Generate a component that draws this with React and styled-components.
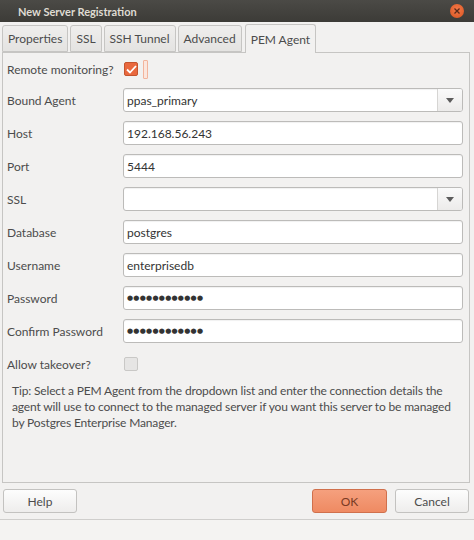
import React from 'react';
import styled, { createGlobalStyle } from 'styled-components';

const GlobalStyle = createGlobalStyle`
  html, body {
    margin: 0;
    padding: 0;
    background: #f2f1f0;
  }
  body {
    font-family: Lato, "Noto Sans", sans-serif;
  }
`;

const fields = [
  { label: 'Bound Agent', value: 'ppas_primary', select: true },
  { label: 'Host', value: '192.168.56.243' },
  { label: 'Port', value: '5444' },
  { label: 'SSL', value: '', select: true },
  { label: 'Database', value: 'postgres' },
  { label: 'Username', value: 'enterprisedb' },
  { label: 'Password', value: '●●●●●●●●●●●●', secret: true },
  { label: 'Confirm Password', value: '●●●●●●●●●●●●', secret: true },
];

const tabs = ['Properties', 'SSL', 'SSH Tunnel', 'Advanced', 'PEM Agent'];

const App = () => (
  <Window>
    <GlobalStyle />
    <TitleBar>
      <Title>New Server Registration</Title>
      <CloseButton>
        <svg width="8" height="8" viewBox="0 0 8 8">
          <path d="M1.5 1.5 L6.5 6.5 M6.5 1.5 L1.5 6.5" stroke="#5a2a1a" strokeWidth="1.3" />
        </svg>
      </CloseButton>
    </TitleBar>

    <TabBar>
      {tabs.map(t => (
        <Tab key={t} active={t === 'PEM Agent'}>{t}</Tab>
      ))}
    </TabBar>

    <Panel>
      <CheckRow>
        <Label>Remote monitoring?</Label>
        <CheckBox checked>
          <svg width="11" height="9" viewBox="0 0 11 9">
            <path d="M1 4.5 L4 7.5 L10 1" stroke="#fff" strokeWidth="1.8" fill="none" />
          </svg>
        </CheckBox>
        <FocusBar />
      </CheckRow>

      {fields.map(f => (
        <Row key={f.label}>
          <Label>{f.label}</Label>
          <Input>
            <InputText secret={f.secret}>{f.value}</InputText>
            {f.select && (
              <DropButton>
                <svg width="8" height="5" viewBox="0 0 8 5">
                  <path d="M0 0 L8 0 L4 5 Z" fill="#5c5c5c" />
                </svg>
              </DropButton>
            )}
          </Input>
        </Row>
      ))}

      <CheckRow>
        <Label>Allow takeover?</Label>
        <CheckBox />
      </CheckRow>

      <Tip>
        Tip: Select a PEM Agent from the dropdown list and enter the connection details the
        agent will use to connect to the managed server if you want this server to be managed
        by Postgres Enterprise Manager.
      </Tip>
    </Panel>

    <ButtonBar>
      <Button>Help</Button>
      <Spacer />
      <Button primary>OK</Button>
      <Button>Cancel</Button>
    </ButtonBar>
    <Footer />
  </Window>
);

const Window = styled.div`
  width: 474px;
  height: 540px;
  display: flex;
  flex-direction: column;
  background: #f2f1f0;
  overflow: hidden;
  font-size: 12px;
  color: #4c4c4c;
`;

const TitleBar = styled.div`
  height: 22px;
  flex: none;
  display: flex;
  align-items: center;
  padding: 0 10px 0 18px;
  background: linear-gradient(#4b4a46, #3c3b37);
`;

const Title = styled.div`
  flex: 1;
  font-weight: bold;
  font-size: 11px;
  color: #dfdbd2;
`;

const CloseButton = styled.div`
  width: 14px;
  height: 14px;
  border-radius: 50%;
  background: radial-gradient(circle at 50% 40%, #f47a4a, #d8531f);
  display: flex;
  align-items: center;
  justify-content: center;
`;

const TabBar = styled.div`
  height: 30px;
  flex: none;
  display: flex;
  align-items: flex-end;
  gap: 2px;
  padding-left: 2px;
  position: relative;
  z-index: 1;
`;

const Tab = styled.div`
  height: ${p => (p.active ? '28px' : '25px')};
  margin-bottom: ${p => (p.active ? '-1px' : '0')};
  padding: 0 5px;
  display: flex;
  align-items: center;
  border: 1px solid #c6c5c3;
  border-bottom: ${p => (p.active ? 'none' : '1px solid #c6c5c3')};
  border-radius: 3px 3px 0 0;
  background: ${p => (p.active ? '#f2f1f0' : 'linear-gradient(#efeeed, #e4e3e1)')};
  color: #4c4c4c;
  font-size: 12px;
  margin-left: ${p => (p.active ? '1px' : '0')};
`;

const Panel = styled.div`
  height: 431px;
  flex: none;
  margin: 0 4px 0 2px;
  border: 1px solid #c6c5c3;
  display: flex;
  flex-direction: column;
  padding: 4px 6px 0 4px;
  box-sizing: border-box;
`;

const CheckRow = styled.div`
  height: 24px;
  display: flex;
  align-items: center;
  margin-bottom: 7px;
`;

const Row = styled.div`
  height: 24px;
  display: flex;
  align-items: center;
  margin-bottom: 9px;
`;

const Label = styled.div`
  width: 116px;
  flex: none;
  color: #4c4c4c;
  font-size: 12px;
`;

const CheckBox = styled.div`
  width: 14px;
  height: 14px;
  box-sizing: border-box;
  border-radius: 2px;
  margin-left: 1px;
  display: flex;
  align-items: center;
  justify-content: center;
  background: ${p => (p.checked ? '#e9683e' : '#e6e5e4')};
  border: 1px solid ${p => (p.checked ? '#c4542e' : '#c9c8c6')};
`;

const FocusBar = styled.div`
  width: 3px;
  height: 17px;
  margin-left: 5px;
  border: 1px solid #f2b49c;
  border-radius: 1px;
  background: #fbe6dd;
`;

const Input = styled.div`
  flex: 1;
  height: 24px;
  box-sizing: border-box;
  display: flex;
  align-items: stretch;
  background: #fff;
  border: 1px solid #bcbbb9;
  border-radius: 3px;
  box-shadow: inset 0 1px 1px rgba(0, 0, 0, 0.06);
  overflow: hidden;
`;

const InputText = styled.div`
  flex: 1;
  display: flex;
  align-items: center;
  padding-left: 3px;
  color: #333;
  font-size: ${p => (p.secret ? '7px' : '12px')};
  letter-spacing: ${p => (p.secret ? '0.25px' : '0')};
  font-family: ${p => (p.secret ? '"DejaVu Sans", sans-serif' : 'inherit')};
`;

const DropButton = styled.div`
  width: 24px;
  flex: none;
  display: flex;
  align-items: center;
  justify-content: center;
  border-left: 1px solid #d6d5d3;
  background: linear-gradient(#fafafa, #ecebea);
`;

const Tip = styled.div`
  margin-top: 0;
  padding-left: 5px;
  line-height: 16px;
  font-size: 12px;
  letter-spacing: -0.15px;
  color: #4c4c4c;
`;

const ButtonBar = styled.div`
  height: 37px;
  flex: none;
  display: flex;
  align-items: center;
  gap: 8px;
  padding: 0 5px 0 3px;
  border-bottom: 1px solid #cfcecc;
  box-sizing: border-box;
`;

const Spacer = styled.div`
  flex: 1;
`;

const Button = styled.div`
  width: ${p => (p.primary ? '75px' : '74px')};
  height: 24px;
  box-sizing: border-box;
  display: flex;
  align-items: center;
  justify-content: center;
  border-radius: 3px;
  font-size: 12px;
  color: ${p => (p.primary ? '#7a3b24' : '#4c4c4c')};
  border: 1px solid ${p => (p.primary ? '#d0704c' : '#c3c2c0')};
  background: ${p => (p.primary ? 'linear-gradient(#f5a07e, #ef8a62)' : 'linear-gradient(#fdfdfd, #eeedec)')};
`;

const Footer = styled.div`
  flex: 1;
  background: #f4f3f2;
`;

export default App;
